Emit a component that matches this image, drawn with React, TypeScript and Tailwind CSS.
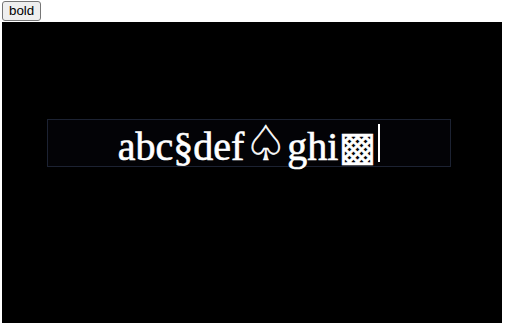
import React from 'react';

export default function App() {
  return (
    <div className="w-[507px] h-[323px] bg-white overflow-hidden">
      <button className="block ml-[2px] mt-[1px] h-[20px] px-[6px] text-[13.33px] leading-none border border-[#767676] rounded-[3px] bg-[#efefef] text-black font-['Liberation_Sans',Arial,sans-serif]">
        bold
      </button>
      <div className="ml-[2px] mt-[1px] w-[500px] h-[301px] bg-black pt-[97px] pl-[45px]">
        <div className="w-[404px] h-[48px] border border-[#1c2232] bg-[#030306] flex items-center justify-center">
          <span className="text-white text-[40px] leading-none whitespace-pre font-['Liberation_Serif',serif] [-webkit-text-stroke:0.6px_white]">
            abc§def<span className="text-[48px] font-['DejaVu_Sans',sans-serif]">♤</span>ghi<span className="text-[40px] font-['DejaVu_Sans',sans-serif]">▩</span>
          </span>
          <span className="w-[2px] h-[38px] bg-white ml-[2px]" />
        </div>
      </div>
    </div>
  );
}
